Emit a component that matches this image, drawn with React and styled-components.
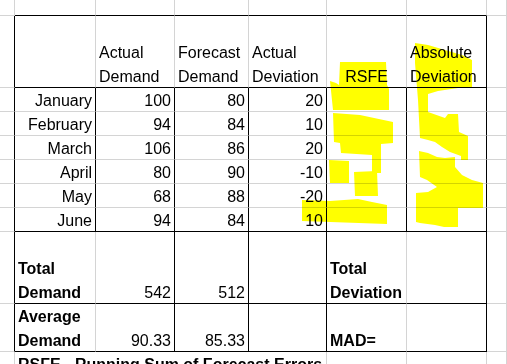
import React from "react";
import styled, { createGlobalStyle } from "styled-components";

const GRID = "#d4d4d4";
const INK = "#000";

const Global = createGlobalStyle`
  html, body {
    margin: 0;
    padding: 0;
    background: #fff;
    overflow: hidden;
  }
`;

const Sheet = styled.div`
  position: relative;
  display: grid;
  grid-template-columns: 15px 81px 79px 74px 78px 80px 80px 1fr;
  grid-template-rows: 16px 72px repeat(6, 24px) 72px 48px 24px;
  width: 507px;
  height: 364px;
  overflow: hidden;
  font-family: "Liberation Sans", Arial, sans-serif;
  font-size: 16px;
  color: #000;
`;

const Cell = styled.div`
  box-sizing: border-box;
  display: flex;
  flex-direction: column;
  justify-content: flex-end;
  align-items: ${(p) =>
    p.$align === "right" ? "flex-end" : p.$align === "center" ? "center" : "flex-start"};
  padding: 0 3px;
  border-right: 1px solid ${(p) => (p.$r ? INK : GRID)};
  border-bottom: 1px solid ${(p) => (p.$b ? INK : GRID)};
  grid-column: ${(p) => (p.$span ? `span ${p.$span}` : "auto")};
  font-weight: ${(p) => (p.$bold ? 700 : 400)};
  line-height: 24px;
  white-space: nowrap;
  overflow: visible;
  background: transparent;
`;

const Line = styled.span`
  display: block;
  &:last-child {
    margin-bottom: -2px;
  }
`;

const Highlight = styled.svg`
  position: absolute;
  left: 0;
  top: 0;
  pointer-events: none;
  mix-blend-mode: multiply;
`;

const months = [
  ["January", 100, 80, 20],
  ["February", 94, 84, 10],
  ["March", 106, 86, 20],
  ["April", 80, 90, -10],
  ["May", 68, 88, -20],
  ["June", 94, 84, 10],
];

const strokes = [
  "340,62 386,62 387,85 389,89 389,110 333,110 330,81 336,83 339,85",
  "333,113 360,115 393,122 393,143 381,144 381,173 372,173 372,155 341,153 340,143 334,142",
  "329,160 349,161 349,183 330,183",
  "354,172 377,171 378,196 355,196",
  "302,200 330,201 358,199 372,202 387,205 387,224 302,221",
  "415,43 428,45 445,50 462,55 472,60 472,87 458,88 438,91 428,94 428,112 445,118 448,114 458,114 459,132 468,136 468,160 461,160 461,156 450,152 442,147 435,142 428,140 420,138 418,100 415,63",
  "419,151 428,153 437,157 445,158 455,157 455,167 462,175 472,180 483,183 483,208 458,208 458,227 444,227 435,225 420,223 416,222 416,193 428,192 437,187 427,180 420,177",
];

const Text = ({ lines }) =>
  lines.map((l, i) => <Line key={i}>{l}</Line>);

const App = () => (
  <>
    <Global />
    <Sheet>
      {/* row above the table */}
      <Cell />
      {[1, 2, 3, 4, 5, 6].map((c) => (
        <Cell key={c} $b />
      ))}
      <Cell />

      {/* header */}
      <Cell $r />
      <Cell $b />
      <Cell $b>
        <Text lines={["Actual", "Demand"]} />
      </Cell>
      <Cell $b>
        <Text lines={["Forecast", "Demand"]} />
      </Cell>
      <Cell $b>
        <Text lines={["Actual", "Deviation"]} />
      </Cell>
      <Cell $b $align="center">
        <Text lines={["RSFE"]} />
      </Cell>
      <Cell $b $r>
        <Text lines={["Absolute", "Deviation"]} />
      </Cell>
      <Cell />

      {/* month rows */}
      {months.map(([m, a, f, d], i) => {
        const last = i === months.length - 1;
        return (
          <React.Fragment key={m}>
            <Cell $r />
            <Cell $r $b={last} $align="right">
              <Text lines={[m]} />
            </Cell>
            <Cell $r $b={last} $align="right">
              <Text lines={[a]} />
            </Cell>
            <Cell $r $b={last} $align="right">
              <Text lines={[f]} />
            </Cell>
            <Cell $r $b={last} $align="right">
              <Text lines={[d]} />
            </Cell>
            <Cell $r $b={last} />
            <Cell $r $b={last} />
            <Cell />
          </React.Fragment>
        );
      })}

      {/* totals */}
      <Cell $r />
      <Cell $b $bold>
        <Text lines={["Total", "Demand"]} />
      </Cell>
      <Cell $r $b $align="right">
        <Text lines={["542"]} />
      </Cell>
      <Cell $r $b $align="right">
        <Text lines={["512"]} />
      </Cell>
      <Cell $r $b />
      <Cell $b $bold>
        <Text lines={["Total", "Deviation"]} />
      </Cell>
      <Cell $r $b />
      <Cell />

      {/* averages */}
      <Cell $r />
      <Cell $b $bold>
        <Text lines={["Average", "Demand"]} />
      </Cell>
      <Cell $r $b $align="right">
        <Text lines={["90.33"]} />
      </Cell>
      <Cell $r $b $align="right">
        <Text lines={["85.33"]} />
      </Cell>
      <Cell $r $b />
      <Cell $b $bold>
        <Text lines={["MAD="]} />
      </Cell>
      <Cell $r $b />
      <Cell />

      {/* note */}
      <Cell />
      <Cell $span={4} $bold>
        <Text lines={["RSFE - Running Sum of Forecast Errors"]} />
      </Cell>
      <Cell />
      <Cell />
      <Cell />

      <Highlight width="507" height="364" viewBox="0 0 507 364">
        {strokes.map((p, i) => (
          <polygon key={i} points={p} fill="#ffff00" />
        ))}
      </Highlight>
    </Sheet>
  </>
);

export default App;
